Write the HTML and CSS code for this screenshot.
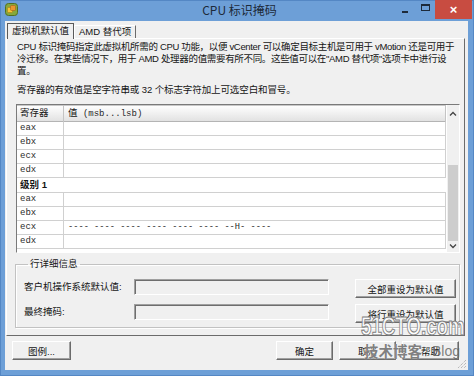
FILE: index.html
```html
<!DOCTYPE html>
<html lang="zh-CN">
<head>
    <meta charset="UTF-8">
    <meta name="viewport" content="width=device-width, initial-scale=1.0">
    <title>CPU 标识掩码</title>
    <link rel="stylesheet" href="styles.css">
</head>
<body>

    <div class="window">
        <!-- Title bar -->
        <div class="titlebar">
            <svg class="app-icon" width="13" height="13" viewBox="0 0 13 13">
                <rect x="0.5" y="0.5" width="12" height="12" rx="3" fill="#86a83c" stroke="#526e22"/>
                <rect x="2.5" y="4.5" width="5" height="5" rx="1" fill="#f4c735" stroke="#b07a18" stroke-width="0.6"/>
                <rect x="5.5" y="2.5" width="5" height="5" rx="1" fill="#e9962f" stroke="#a8601a" stroke-width="0.6"/>
            </svg>
            <span class="title">CPU 标识掩码</span>
            <div class="controls">
                <span class="ctl"><span class="min-glyph"></span></span>
                <span class="ctl"><span class="max-glyph"></span></span>
                <span class="ctl close">×</span>
            </div>
        </div>

        <div class="client">
            <div class="tabs">
                <span class="tab active">虚拟机默认值</span>
                <span class="tab">AMD 替代项</span>
            </div>

            <div class="panel">
                <p class="desc">
                    CPU 标识掩码指定此虚拟机所需的 CPU 功能，以便 vCenter 可以确定目标主机是可用于 vMotion 还是可用于<br>
                    冷迁移。在某些情况下，用于 AMD 处理器的值需要有所不同。这些值可以在"AMD 替代项"选项卡中进行设<br>
                    置。
                </p>
                <p class="hint">寄存器的有效值是空字符串或 32 个标志字符加上可选空白和冒号。</p>

                <!-- Register table -->
                <div class="grid-wrap">
                    <div class="grid">
                        <div class="row head">
                            <div class="cell reg">寄存器</div>
                            <div class="cell val">值<span class="mono"> (msb...lsb)</span></div>
                        </div>
                        <div class="row"><div class="cell reg mono">eax</div><div class="cell val"></div></div>
                        <div class="row"><div class="cell reg mono">ebx</div><div class="cell val"></div></div>
                        <div class="row"><div class="cell reg mono">ecx</div><div class="cell val"></div></div>
                        <div class="row"><div class="cell reg mono">edx</div><div class="cell val"></div></div>
                        <div class="level">级别 1</div>
                        <div class="row"><div class="cell reg mono">eax</div><div class="cell val"></div></div>
                        <div class="row"><div class="cell reg mono">ebx</div><div class="cell val"></div></div>
                        <div class="row"><div class="cell reg mono">ecx</div><div class="cell val mono bits">---- ---- ---- ---- ---- ---- --H- ----</div></div>
                        <div class="row"><div class="cell reg mono">edx</div><div class="cell val"></div></div>
                    </div>
                    <div class="scrollbar">
                        <div class="sb-btn up">
                            <svg width="8" height="5" viewBox="0 0 8 5"><polyline points="1,4.5 4,1.5 7,4.5" fill="none" stroke="#444" stroke-width="1.3"/></svg>
                        </div>
                        <div class="sb-track"><div class="sb-thumb"></div></div>
                        <div class="sb-btn down">
                            <svg width="8" height="5" viewBox="0 0 8 5"><polyline points="1,0.5 4,3.5 7,0.5" fill="none" stroke="#444" stroke-width="1.3"/></svg>
                        </div>
                    </div>
                </div>

                <!-- Row details -->
                <fieldset class="details">
                    <legend>行详细信息</legend>
                    <div class="detail-row">
                        <label>客户机操作系统默认值:</label>
                        <span class="field"></span>
                        <button class="btn wide">全部重设为默认值</button>
                    </div>
                    <div class="detail-row">
                        <label>最终掩码:</label>
                        <span class="field"></span>
                        <button class="btn wide">将行重设为默认值</button>
                    </div>
                </fieldset>
            </div>

            <div class="footer">
                <button class="btn legend-btn">图例...</button>
                <div class="footer-right">
                    <button class="btn">确定</button>
                    <button class="btn">取消</button>
                    <button class="btn">帮助</button>
                </div>
            </div>

            <svg class="grip" width="10" height="10" viewBox="0 0 10 10">
                <path d="M9 1 L1 9 M9 4 L4 9 M9 7 L7 9" stroke="#a0a0a0" stroke-width="1" stroke-dasharray="1 1"/>
            </svg>
        </div>

        <!-- watermark of the source site -->
        <div class="watermark">
            <span class="wm-logo">51CTO.com</span>
            <span class="wm-sub">技术博客</span>
            <span class="wm-blog">Blog</span>
        </div>
    </div>

</body>
</html>
```

FILE: styles.css
```css
* {
    margin: 0;
    padding: 0;
    box-sizing: border-box;
}

body {
    font-family: "Liberation Sans", "Noto Sans CJK SC", sans-serif;
    font-size: 9.5px;
    color: #151515;
    background: #6d9fd7;
    overflow: hidden;
}

.window {
    position: relative;
    width: 474px;
    height: 376px;
    display: flex;
    flex-direction: column;
    background: #6d9fd7;
    padding: 0 6px 6px 5px;
    box-shadow: inset 0 0 0 1px #5487c4;
    overflow: hidden;
}

/* Title bar */
.titlebar {
    height: 21px;
    margin: 0 -6px 0 -5px;
    padding-left: 5px;
    display: grid;
    grid-template-columns: 1fr auto 1fr;
    align-items: start;
}

.app-icon {
    margin-top: 3px;
}

.title {
    font-family: "Noto Sans CJK SC", sans-serif;
    font-size: 12px;
    line-height: 20px;
    color: #1d2a3a;
}

.controls {
    justify-self: end;
    display: flex;
    padding-right: 2px;
}

.ctl {
    width: 20px;
    height: 19px;
    display: flex;
    justify-content: center;
    align-items: center;
}

.min-glyph {
    width: 6px;
    height: 2px;
    margin-top: 4px;
    background: #1d2a3a;
}

.max-glyph {
    width: 9px;
    height: 7px;
    margin-top: -4px;
    border: 1px solid #1d2a3a;
    border-top-width: 2px;
}

.ctl.close {
    width: 37px;
    background: #c84c41;
    color: #fff;
    font-size: 13px;
    font-weight: bold;
    line-height: 16px;
}

/* Client area */
.client {
    position: relative;
    flex: 1;
    display: flex;
    flex-direction: column;
    background: #f0f0f0;
}

.tabs {
    height: 17px;
    display: flex;
    align-items: flex-end;
    padding-left: 2px;
    position: relative;
    z-index: 1;
}

.tab {
    height: 13px;
    padding: 0 4px;
    line-height: 12px;
    border: 1px solid #fff;
    border-right-color: #6b6b6b;
    border-bottom: none;
}

.tab.active {
    height: 16px;
    margin-bottom: -1px;
    padding: 0 4px;
    line-height: 14px;
    background: #f0f0f0;
    border-color: #5a5a5a;
}

.panel {
    flex: 1;
    margin: 0 3px 0 1px;
    padding: 2px 4px 0 9px;
    border: 1px solid #fff;
    border-right-color: #6b6b6b;
    border-bottom-color: #6b6b6b;
    display: flex;
    flex-direction: column;
}

.desc {
    padding-left: 1px;
    line-height: 12px;
    letter-spacing: -0.33px;
    white-space: nowrap;
}

.hint {
    margin-top: 7px;
    padding-left: 1px;
    line-height: 12px;
    letter-spacing: -0.1px;
}

/* Register table */
.grid-wrap {
    margin-top: 8px;
    height: 149px;
    display: flex;
    border: 1px solid #fff;
    border-top-color: #7a7a7a;
    border-left-color: #7a7a7a;
    background: #fff;
}

.grid {
    flex: 1;
    padding-right: 1px;
}

.row {
    display: grid;
    grid-template-columns: 47px 1fr;
    height: 14px;
    border-bottom: 1px solid #d0d0d0;
    line-height: 13px;
}

.cell {
    white-space: nowrap;
}

.cell.reg {
    padding-left: 3px;
    border-right: 1px solid #d0d0d0;
}

.cell.val {
    padding-left: 4px;
    border-right: 1px solid #d0d0d0;
}

.row.head {
    height: 17px;
    line-height: 16px;
    background: linear-gradient(#ffffff, #f4f4f4 40%, #e2e2e2);
    border-bottom: 1px solid #b4b4b4;
    box-shadow: inset 0 1px 0 #c8c8c8;
}

.row.head .cell {
    border-right: 1px solid #c4c4c4;
}

.mono {
    font-family: "Liberation Mono", monospace;
    font-size: 9px;
    color: #2a2a2a;
}

.bits {
    font-size: 8.7px;
}

.level {
    height: 15px;
    line-height: 14px;
    padding-left: 3px;
    font-weight: bold;
    border-bottom: 1px solid #d0d0d0;
}

.scrollbar {
    width: 12px;
    display: flex;
    flex-direction: column;
    background: #f0f0f0;
}

.sb-btn {
    display: flex;
    justify-content: center;
    align-items: center;
}

.sb-btn.up {
    height: 16px;
}

.sb-btn.down {
    height: 11px;
}

.sb-track {
    flex: 1;
    display: flex;
    flex-direction: column;
    justify-content: flex-end;
    padding: 0 1px;
}

.sb-thumb {
    height: 76px;
    background: #cdcdcd;
}

/* Row details group */
.details {
    margin: 5px 0 0 -1px;
    padding: 0 3px 4px 8px;
    border: 1px solid #c2c2c2;
    box-shadow: inset 1px 1px 0 #fff, 1px 1px 0 #fff;
    min-width: 0;
}

.details legend {
    margin-left: 4px;
    padding: 0 2px;
    line-height: 12px;
}

.detail-row {
    display: flex;
    align-items: flex-start;
    margin-top: 9px;
}

.detail-row + .detail-row {
    margin-top: 6px;
}

.detail-row label {
    width: 110px;
    line-height: 15px;
}

.field {
    width: 195px;
    height: 16px;
    background: #f0f0f0;
    border: 1px solid #fff;
    border-top-color: #a0a0a0;
    border-left-color: #a0a0a0;
    box-shadow: inset 1px 1px 0 #6e6e6e;
}

.btn {
    height: 19px;
    font-family: inherit;
    font-size: 9.5px;
    color: #151515;
    background: #f0f0f0;
    border: 1px solid #fff;
    border-right-color: #6b6b6b;
    border-bottom-color: #6b6b6b;
    box-shadow: inset -1px -1px 0 #a0a0a0;
}

.btn.wide {
    width: 101px;
    margin-left: auto;
}

/* Footer buttons */
.footer {
    height: 34px;
    display: flex;
    justify-content: space-between;
    padding: 5px 9px 0 7px;
}

.footer .btn {
    width: 57px;
}

.footer .legend-btn {
    width: 59px;
}

.footer-right {
    display: flex;
    gap: 6px;
}

.grip {
    position: absolute;
    right: 1px;
    bottom: 1px;
}

/* Watermark */
.watermark {
    position: absolute;
    left: 361px;
    top: 311px;
    width: 110px;
    height: 56px;
    pointer-events: none;
}

.wm-logo {
    position: absolute;
    left: 0;
    top: 0;
    font-family: "Liberation Sans", sans-serif;
    font-weight: bold;
    font-size: 26px;
    line-height: 30px;
    white-space: nowrap;
    color: rgba(255, 255, 255, 0.9);
    -webkit-text-stroke: 1px #7c7c7c;
    transform: scaleX(0.72);
    transform-origin: left top;
}

.wm-sub {
    position: absolute;
    left: 3px;
    top: 30px;
    font-family: "Noto Sans CJK SC", sans-serif;
    font-weight: bold;
    font-size: 14.5px;
    line-height: 20px;
    color: rgba(105, 105, 105, 0.85);
    text-shadow: 0 0 1px #fff;
}

.wm-blog {
    position: absolute;
    left: 71px;
    top: 31px;
    font-family: "Liberation Sans", sans-serif;
    font-size: 14px;
    line-height: 18px;
    color: rgba(105, 105, 105, 0.85);
}
```
